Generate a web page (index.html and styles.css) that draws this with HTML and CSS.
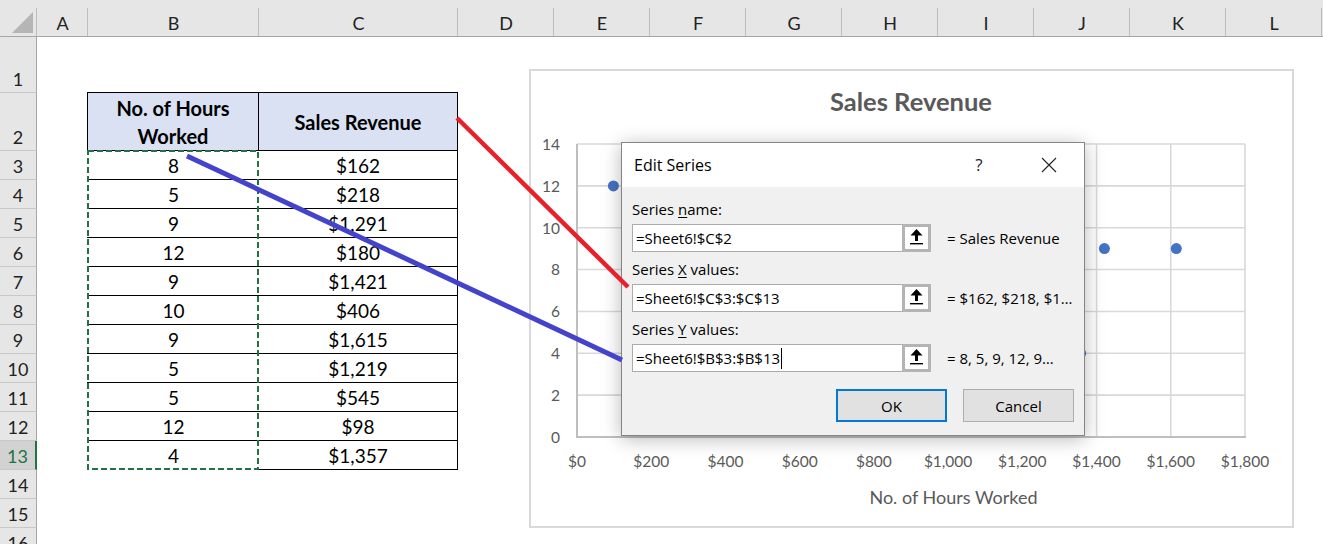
FILE: index.html
```html
<!DOCTYPE html>
<html>
<head>
<meta charset="utf-8">
<link rel="stylesheet" href="styles.css">
</head>
<body>
<div class="sheet">
  <div class="corner"><span class="tri"></span></div>
  <div class="ch">A</div><div class="ch">B</div><div class="ch">C</div><div class="ch">D</div><div class="ch">E</div><div class="ch">F</div><div class="ch">G</div><div class="ch">H</div><div class="ch">I</div><div class="ch">J</div><div class="ch">K</div><div class="ch">L</div><div class="ch end"></div>

  <div class="rh r1">1</div>
  <div class="rh r2">2</div>
  <div class="rh">3</div><div class="rh">4</div><div class="rh">5</div><div class="rh">6</div><div class="rh">7</div><div class="rh">8</div><div class="rh">9</div><div class="rh">10</div><div class="rh">11</div><div class="rh">12</div>
  <div class="rh sel">13</div>
  <div class="rh">14</div><div class="rh">15</div><div class="rh">16</div>

  <div class="tbl">
    <div class="th thb">No. of Hours<br>Worked</div>
    <div class="th thc">Sales Revenue</div>
    <div class="tb">8</div><div class="tc">$162</div>
    <div class="tb">5</div><div class="tc">$218</div>
    <div class="tb">9</div><div class="tc">$1,291</div>
    <div class="tb">12</div><div class="tc">$180</div>
    <div class="tb">9</div><div class="tc">$1,421</div>
    <div class="tb">10</div><div class="tc">$406</div>
    <div class="tb">9</div><div class="tc">$1,615</div>
    <div class="tb">5</div><div class="tc">$1,219</div>
    <div class="tb">5</div><div class="tc">$545</div>
    <div class="tb">12</div><div class="tc">$98</div>
    <div class="tb last">4</div><div class="tc">$1,357</div>
    <svg class="marquee" width="172" height="320" viewBox="0 0 172 320">
      <rect x="1" y="1" width="170" height="318" fill="none" stroke="#217346" stroke-width="2" stroke-dasharray="6 3"/>
    </svg>
  </div>

  <div class="chart">
    <svg class="chart-svg" width="761" height="455" viewBox="0 0 761 455">
      <text class="ctitle" x="380" y="40" text-anchor="middle">Sales Revenue</text>
      <g stroke="#D9D9D9" stroke-width="1.6">
        <line x1="46" y1="73" x2="714" y2="73"/>
        <line x1="46" y1="114.86" x2="714" y2="114.86"/>
        <line x1="46" y1="156.71" x2="714" y2="156.71"/>
        <line x1="46" y1="198.57" x2="714" y2="198.57"/>
        <line x1="46" y1="240.43" x2="714" y2="240.43"/>
        <line x1="46" y1="282.29" x2="714" y2="282.29"/>
        <line x1="46" y1="324.14" x2="714" y2="324.14"/>
        <line x1="120.22" y1="73" x2="120.22" y2="366"/>
        <line x1="194.44" y1="73" x2="194.44" y2="366"/>
        <line x1="268.67" y1="73" x2="268.67" y2="366"/>
        <line x1="342.89" y1="73" x2="342.89" y2="366"/>
        <line x1="417.11" y1="73" x2="417.11" y2="366"/>
        <line x1="491.33" y1="73" x2="491.33" y2="366"/>
        <line x1="565.56" y1="73" x2="565.56" y2="366"/>
        <line x1="639.78" y1="73" x2="639.78" y2="366"/>
        <line x1="714" y1="73" x2="714" y2="366"/>
      </g>
      <g stroke="#BFBFBF" stroke-width="2">
        <line x1="46" y1="73" x2="46" y2="367"/>
        <line x1="45" y1="366" x2="715" y2="366"/>
      </g>
      <g class="ylab" text-anchor="end">
        <text x="29" y="79">14</text>
        <text x="29" y="121">12</text>
        <text x="29" y="163">10</text>
        <text x="29" y="204">8</text>
        <text x="29" y="246">6</text>
        <text x="29" y="288">4</text>
        <text x="29" y="330">2</text>
        <text x="29" y="372">0</text>
      </g>
      <g class="xlab" text-anchor="middle">
        <text x="46" y="396">$0</text>
        <text x="120.22" y="396">$200</text>
        <text x="194.44" y="396">$400</text>
        <text x="268.67" y="396">$600</text>
        <text x="342.89" y="396">$800</text>
        <text x="417.11" y="396">$1,000</text>
        <text x="491.33" y="396">$1,200</text>
        <text x="565.56" y="396">$1,400</text>
        <text x="639.78" y="396">$1,600</text>
        <text x="714" y="396">$1,800</text>
      </g>
      <text class="atitle" x="422.5" y="433" text-anchor="middle">No. of Hours Worked</text>
      <g fill="#4472C4">
        <circle cx="106.1" cy="198.6" r="5.5"/>
        <circle cx="126.9" cy="261.4" r="5.5"/>
        <circle cx="525.1" cy="177.6" r="5.5"/>
        <circle cx="112.8" cy="114.9" r="5.5"/>
        <circle cx="573.4" cy="177.6" r="5.5"/>
        <circle cx="196.7" cy="156.7" r="5.5"/>
        <circle cx="645.3" cy="177.6" r="5.5"/>
        <circle cx="498.4" cy="261.4" r="5.5"/>
        <circle cx="248.3" cy="261.4" r="5.5"/>
        <circle cx="82.4" cy="114.9" r="5.5"/>
        <circle cx="549.6" cy="282.3" r="5.5"/>
      </g>
    </svg>
  </div>

  <div class="dialog">
    <div class="dtitle">
      <span class="dname">Edit Series</span>
      <span class="dbtn">?</span>
      <span class="dbtn">
        <svg width="16" height="16" viewBox="0 0 16 16"><path d="M1 1 L15 15 M15 1 L1 15" stroke="#222" stroke-width="1.1" fill="none"/></svg>
      </span>
    </div>
    <div class="dbody">
      <div class="dlabel">Series <u>n</u>ame:</div>
      <div class="frow">
        <div class="finput">=Sheet6!$C$2</div>
        <div class="fref"><span class="fref-in"><svg width="23" height="22" viewBox="0 0 23 22"><polygon points="11.5,2 5.5,8.5 17.5,8.5" fill="#000"/><rect x="10" y="8" width="3" height="6" fill="#000"/><rect x="5" y="16" width="13" height="1.4" fill="#000"/></svg></span></div>
        <div class="fval">= Sales Revenue</div>
      </div>
      <div class="dlabel">Series <u>X</u> values:</div>
      <div class="frow">
        <div class="finput">=Sheet6!$C$3:$C$13</div>
        <div class="fref"><span class="fref-in"><svg width="23" height="22" viewBox="0 0 23 22"><polygon points="11.5,2 5.5,8.5 17.5,8.5" fill="#000"/><rect x="10" y="8" width="3" height="6" fill="#000"/><rect x="5" y="16" width="13" height="1.4" fill="#000"/></svg></span></div>
        <div class="fval">= $162, $218, $1…</div>
      </div>
      <div class="dlabel">Series <u>Y</u> values:</div>
      <div class="frow">
        <div class="finput">=Sheet6!$B$3:$B$13<span class="caret"></span></div>
        <div class="fref"><span class="fref-in"><svg width="23" height="22" viewBox="0 0 23 22"><polygon points="11.5,2 5.5,8.5 17.5,8.5" fill="#000"/><rect x="10" y="8" width="3" height="6" fill="#000"/><rect x="5" y="16" width="13" height="1.4" fill="#000"/></svg></span></div>
        <div class="fval">= 8, 5, 9, 12, 9…</div>
      </div>
      <div class="btns">
        <div class="btn ok">OK</div>
        <div class="btn">Cancel</div>
      </div>
    </div>
  </div>

  <svg class="arrows" width="1323" height="544" viewBox="0 0 1323 544">
    <line x1="457" y1="118" x2="628" y2="287" stroke="#E8202A" stroke-width="4.5"/>
    <line x1="187" y1="156" x2="622" y2="360" stroke="#4343CC" stroke-width="5"/>
  </svg>
</div>
</body>
</html>
```
FILE: styles.css
```css
html, body {
  margin: 0;
  padding: 0;
  background: #fff;
}
body {
  width: 1323px;
  height: 544px;
  overflow: hidden;
}
.sheet {
  position: relative;
  display: grid;
  grid-template-columns: 37px 51px 171px 199px repeat(9, 96px) 1fr;
  grid-template-rows: 37px 56px 58px repeat(14, 29px);
  width: 1323px;
  height: 544px;
  font-family: Lato, "Liberation Sans", sans-serif;
  color: #111;
}
.corner {
  box-sizing: border-box;
  background: linear-gradient(#BDBDBD, #BDBDBD) right bottom / 1px 28px no-repeat, #E6E6E6;
  border-bottom: 1px solid #A6A6A6;
  position: relative;
}
.tri {
  display: block;
  width: 0;
  height: 0;
  margin: 12px 0 0 12px;
  border-style: solid;
  border-width: 0 0 21px 21px;
  border-color: transparent transparent #B5B5B5 transparent;
}
.ch {
  box-sizing: border-box;
  background: linear-gradient(#BDBDBD, #BDBDBD) right bottom / 1px 28px no-repeat, #E6E6E6;
  border-bottom: 1px solid #A6A6A6;
  display: flex;
  align-items: flex-end;
  justify-content: center;
  font-size: 18px;
  line-height: 22px;
  padding-bottom: 2px;
  color: #222;
}
.ch.end {
  background: #E6E6E6;
}
.rh {
  grid-column: 1;
  box-sizing: border-box;
  background: #E6E6E6;
  border-right: 1px solid #A6A6A6;
  border-bottom: 1px solid #C8C8C8;
  display: flex;
  align-items: flex-end;
  justify-content: center;
  font-size: 18px;
  line-height: 22px;
  padding-bottom: 2px;
  color: #222;
}
.rh.sel {
  background: #D2D2D2;
  color: #217346;
  border-right: 2px solid #217346;
}
.r1 { grid-row: 2; }
.r2 { grid-row: 3; }

.tbl {
  grid-column: 3 / 5;
  grid-row: 3 / 15;
  margin: -1px 0 0 -1px;
  position: relative;
  display: grid;
  grid-template-columns: 172px 199px;
  grid-template-rows: 59px repeat(11, 29px);
  align-self: start;
  font-size: 19px;
  color: #000;
}
.th {
  box-sizing: border-box;
  background: #D9E1F2;
  border-top: 1px solid #000;
  border-bottom: 1px solid #000;
  border-right: 1px solid #000;
  display: flex;
  align-items: center;
  justify-content: center;
  text-align: center;
  font-weight: 700;
  font-size: 20px;
  line-height: 28px;
}
.thb {
  border-left: 1px solid #000;
}
.tb, .tc {
  box-sizing: border-box;
  border-bottom: 1px solid #000;
  display: flex;
  align-items: flex-end;
  justify-content: center;
  line-height: 23px;
  padding-bottom: 2px;
}
.tb {
  padding-left: 1px;
}
.tb.last {
  border-bottom-color: transparent;
}
.tc {
  border-right: 1px solid #000;
}
.marquee {
  position: absolute;
  left: 0;
  top: 58px;
}

.chart {
  position: absolute;
  left: 529px;
  top: 69px;
  width: 765px;
  height: 459px;
  box-sizing: border-box;
  border: 2px solid #D9D9D9;
  background: #fff;
}
.chart-svg {
  display: block;
  font-family: Lato, "Liberation Sans", sans-serif;
}
.ctitle {
  font-size: 25.5px;
  font-weight: 700;
  fill: #595959;
}
.ylab, .xlab {
  font-size: 15.5px;
  fill: #595959;
}
.atitle {
  font-size: 18px;
  fill: #595959;
}

.dialog {
  position: absolute;
  left: 621px;
  top: 142px;
  width: 464px;
  height: 294px;
  box-sizing: border-box;
  border: 1px solid #858585;
  background: #F0F0F0;
  box-shadow: 0 3px 18px rgba(0, 0, 0, 0.28);
  font-family: "Open Sans", "Noto Sans", sans-serif;
  color: #000;
  display: flex;
  flex-direction: column;
}
.dtitle {
  height: 44px;
  background: #fff;
  display: flex;
  align-items: center;
  padding: 0 12px;
  gap: 24px;
}
.dname {
  flex: 1;
  font-size: 16px;
  line-height: 22px;
}
.dbtn {
  width: 46px;
  display: flex;
  justify-content: center;
  align-items: center;
  font-size: 17px;
  line-height: 22px;
  color: #222;
}
.dbody {
  flex: 1;
  padding: 12px 10px 0 10px;
  font-size: 15px;
  line-height: 20px;
  display: flex;
  flex-direction: column;
}
.dlabel {
  height: 20px;
  margin-bottom: 5px;
}
.dlabel u {
  text-underline-offset: 2px;
  text-decoration-thickness: 1px;
}
.frow {
  display: flex;
  align-items: center;
  height: 28px;
  margin-bottom: 7px;
}
.finput {
  box-sizing: border-box;
  width: 270px;
  height: 28px;
  background: #fff;
  border: 1px solid #ABABAB;
  border-right: none;
  padding: 3px 0 0 3px;
  line-height: 20px;
  white-space: nowrap;
  display: flex;
  align-items: flex-start;
}
.caret {
  display: inline-block;
  width: 1px;
  height: 21px;
  background: #000;
  margin-left: 1px;
}
.fref {
  box-sizing: border-box;
  width: 29px;
  height: 28px;
  background: #B4B4B4;
  padding: 3px;
}
.fref-in {
  display: block;
  width: 23px;
  height: 22px;
  background: #fff;
}
.fref-in svg {
  display: block;
}
.fval {
  margin-left: 16px;
  white-space: nowrap;
}
.btns {
  display: flex;
  justify-content: flex-end;
  gap: 16px;
  margin-top: 10px;
}
.btn {
  box-sizing: border-box;
  width: 111px;
  height: 33px;
  background: #E1E1E1;
  border: 1px solid #ADADAD;
  display: flex;
  align-items: center;
  justify-content: center;
}
.btn.ok {
  border: 2px solid #0078D7;
}

.arrows {
  position: absolute;
  left: 0;
  top: 0;
  pointer-events: none;
}
```
